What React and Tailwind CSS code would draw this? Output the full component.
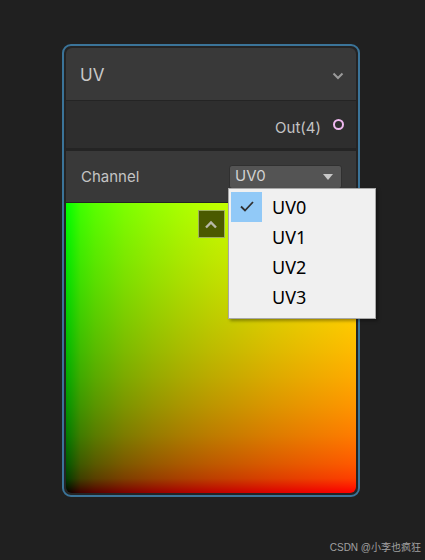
import React from 'react'

// UV preview: R = u, G = v, both gamma encoded (linear -> sRGB stops)
const uvGradient =
  'bg-[linear-gradient(to_right,#000000_0%,#3f0000_5%,#590000_10%,#7c0000_20%,#950000_30%,#aa0000_40%,#bc0000_50%,#cb0000_60%,#da0000_70%,#e70000_80%,#f30000_90%,#ff0000_100%),linear-gradient(to_top,#000000_0%,#003f00_5%,#005900_10%,#007c00_20%,#009500_30%,#00aa00_40%,#00bc00_50%,#00cb00_60%,#00da00_70%,#00e700_80%,#00f300_90%,#00ff00_100%)]'

const options = ['UV0', 'UV1', 'UV2', 'UV3']

function ChevronDown() {
  return (
    <svg width="12" height="8" viewBox="0 0 12 8" fill="none">
      <path d="M1.5 1.5 L6 6 L10.5 1.5" stroke="#9a9a9a" strokeWidth="2" />
    </svg>
  )
}

function ChevronUp() {
  return (
    <svg width="14" height="9" viewBox="0 0 14 9" fill="none">
      <path d="M2 7.5 L7 2.5 L12 7.5" stroke="#b8b8a8" strokeWidth="2.4" />
    </svg>
  )
}

export default function App() {
  return (
    <div className="relative w-[425px] h-[560px] bg-[#202020] pt-[44px] pl-[62px] font-['Inter','Noto_Sans',sans-serif]">
      <div className="w-[298px] border-2 border-[#3b7499] rounded-[9px] bg-[#242424] p-[2px]">
        {/* Titel */}
        <div className="h-[52px] bg-[#393939] rounded-t-[6px] flex items-center justify-between pl-[14px] pr-[12px] pt-[4px]">
          <span className="text-[17px] text-[#c8c8c8]">UV</span>
          <ChevronDown />
        </div>

        {/* Ausgang */}
        <div className="mt-[1px] h-[47px] bg-[#2e2e2e] flex items-center justify-end pr-[12px] gap-[12px]">
          <span className="text-[15px] text-[#c4c4c4] pt-[7px]">Out(4)</span>
          <span className="w-[11px] h-[11px] rounded-full border-2 border-[#f0b8f0]" />
        </div>

        {/* Channel */}
        <div className="mt-[3px] h-[51px] bg-[#393939] flex items-center justify-between pl-[15px] pr-[14px]">
          <span className="text-[15px] text-[#c4c4c4] pt-[1px]">Channel</span>
          <div className="relative">
            <div className="w-[113px] h-[24px] bg-[#545454] rounded-[3px] border border-[#303030] flex items-center justify-between pl-[5px] pr-[8px]">
              <span className="text-[15px] text-[#d2d2d2]">UV0</span>
              <span className="w-0 h-0 border-l-[5px] border-r-[5px] border-t-[6px] border-l-transparent border-r-transparent border-t-[#c8c8c8]" />
            </div>
            <div className="absolute z-10 left-[-1px] top-[23px] w-[148px] bg-[#f0f0f0] border border-[#a8a8a8] pt-[3px] pb-[6px] pl-[2px] shadow-[2px_2px_3px_rgba(0,0,0,0.35)] font-['Noto_Sans','Open_Sans',sans-serif]">
              {options.map((o, i) => (
                <div key={o} className="h-[30px] flex items-center">
                  <div className={`w-[31px] h-[30px] flex items-center justify-center ${i === 0 ? 'bg-[#91c9f7]' : ''}`}>
                    {i === 0 && (
                      <svg width="14" height="11" viewBox="0 0 14 11" fill="none">
                        <path d="M1 5.5 L5 9.5 L13 1" stroke="#303030" strokeWidth="1.8" />
                      </svg>
                    )}
                  </div>
                  <span className="ml-[10px] text-[18px] leading-none text-black">{o}</span>
                </div>
              ))}
            </div>
          </div>
        </div>

        {/* Vorschau */}
        <div className={`mt-[1px] h-[290px] rounded-b-[6px] bg-blend-screen ${uvGradient} flex justify-center pt-[7px]`}>
          <div className="w-[27px] h-[28px] bg-[#4b5a00] border border-[#9fb060] flex items-center justify-center">
            <ChevronUp />
          </div>
        </div>
      </div>

      <span className="absolute right-[4px] bottom-[5px] text-[10px] text-[#a0a0a0] font-['Liberation_Sans','Noto_Sans_CJK_SC',sans-serif]">
        CSDN @小李也疯狂
      </span>
    </div>
  )
}
